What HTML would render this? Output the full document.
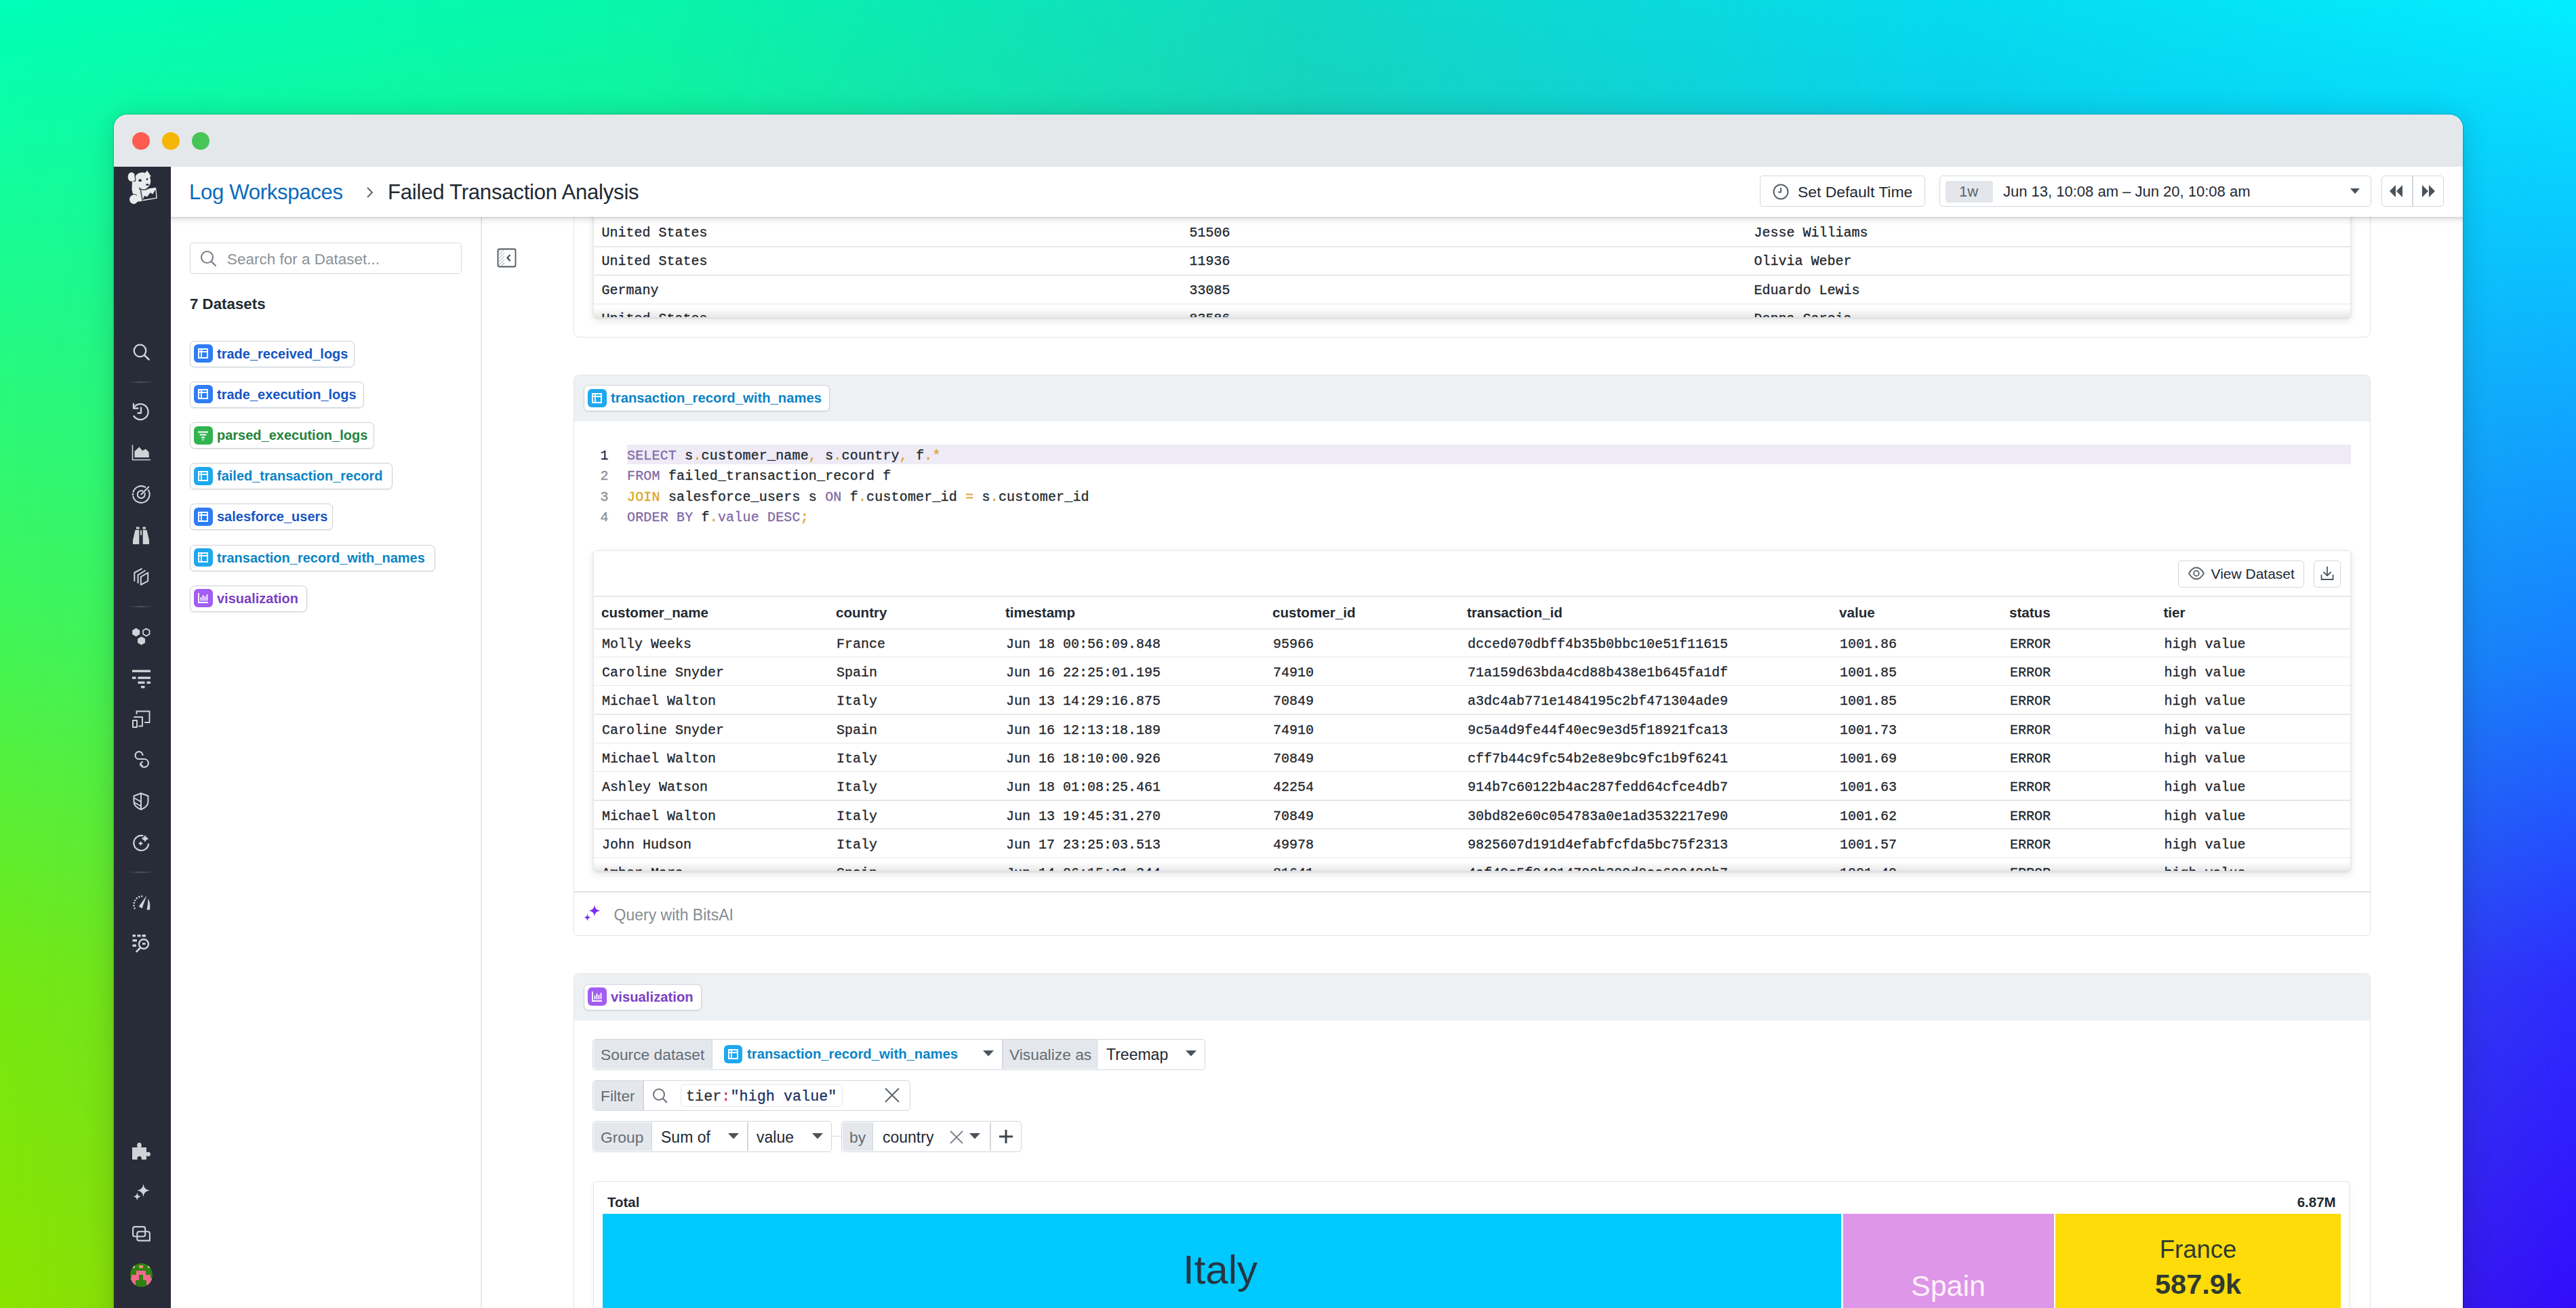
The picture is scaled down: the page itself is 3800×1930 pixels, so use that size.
<!DOCTYPE html><html><head><meta charset="utf-8"><title>Log Workspaces</title><style>
*{box-sizing:border-box;margin:0;padding:0}
html,body{width:3800px;height:1930px;overflow:hidden}
body{position:relative;font-family:"Liberation Sans",sans-serif;background:#00ffb9}
.ab{position:absolute}
.bg{position:absolute;left:0;top:0;width:3800px;height:1930px}
.t{position:absolute;white-space:pre;line-height:1}
.mono{font-family:"Liberation Mono",monospace}
.pill{position:absolute;height:39px;border:1.5px solid #cdd1da;border-radius:7px;background:#fff;box-shadow:0 1px 2px rgba(40,50,80,.10)}
.pill .ic{position:absolute;left:5px;top:4.5px;width:27.5px;height:27px;border-radius:6px}
.pill .tx{position:absolute;left:39px;top:8px;font-size:20px;font-weight:700;white-space:pre;line-height:1}
.card{position:absolute;border:1.5px solid #e2e5e9;border-radius:8px;background:#fff}
.hdrbg{position:absolute;background:#eef1f4}
.row{position:absolute;height:1.5px;background:#e6e8eb}
.cell{position:absolute;white-space:pre;line-height:1;font-family:"Liberation Mono",monospace;font-size:20px;color:#1f262c;-webkit-text-stroke:0.3px currentColor}
.hcell{position:absolute;white-space:pre;line-height:1;font-size:20.6px;font-weight:700;color:#1f2a33}
</style></head><body>
<div class="bg" style="background:linear-gradient(to bottom,#00ffb9 0%,#44f554 50%,#74e914 75%,#8ce400 100%)"></div>
<div class="bg" style="background:linear-gradient(to bottom,#08f6aa 0%,#3ae46a 50%,#6ad040 75%,#78c830 100%);-webkit-mask-image:linear-gradient(to right,transparent 0%,#000 25%)"></div>
<div class="bg" style="background:linear-gradient(to bottom,#12d8c2 0%,#2dbfa0 50%,#5aa070 75%,#60a070 100%);-webkit-mask-image:linear-gradient(to right,transparent 25%,#000 50%)"></div>
<div class="bg" style="background:linear-gradient(to bottom,#06daee 0%,#20a0d0 50%,#3a70c0 75%,#4050b0 100%);-webkit-mask-image:linear-gradient(to right,transparent 50%,#000 75%)"></div>
<div class="bg" style="background:linear-gradient(to bottom,#03eeff 0%,#177dff 50%,#2d2cfe 75%,#330cfc 100%);-webkit-mask-image:linear-gradient(to right,transparent 75%,#000 100%)"></div>
<div class="ab" style="left:168px;top:169px;width:3465px;height:1800px;border-radius:20px 20px 0 0;background:#fff;box-shadow:0 0 3px rgba(0,0,0,.32),0 4px 40px rgba(0,0,0,.17)"></div>
<div class="ab" style="left:168px;top:169px;width:3465px;height:77px;border-radius:20px 20px 0 0;background:#e4e8eb"></div>
<div class="ab" style="left:195px;top:195px;width:26px;height:26px;border-radius:50%;background:#fd5d50"></div>
<div class="ab" style="left:239px;top:195px;width:26px;height:26px;border-radius:50%;background:#f4b505"></div>
<div class="ab" style="left:283px;top:195px;width:26px;height:26px;border-radius:50%;background:#47c556"></div>
<div class="ab" style="left:168px;top:246px;width:84px;height:1700px;background:#272c38"></div>
<div class="ab" style="left:252px;top:246px;width:3381px;height:74px;background:#fff;z-index:5"></div>
<div class="ab" style="left:252px;top:320px;width:3381px;height:12px;background:linear-gradient(to bottom,rgba(0,0,0,.16),rgba(0,0,0,.05) 40%,rgba(0,0,0,0));z-index:5"></div>
<div class="t" style="left:279px;top:268px;font-size:31.2px;letter-spacing:-0.35px;color:#0a6bbd;z-index:6">Log Workspaces</div>
<svg class="ab" style="left:538px;top:274px;z-index:6" width="16" height="20" viewBox="0 0 16 20"><path d="M4 3 L11 10 L4 17" fill="none" stroke="#5d6670" stroke-width="2"/></svg>
<div class="t" style="left:572px;top:268px;font-size:31.2px;letter-spacing:-0.28px;color:#1f2933;z-index:6">Failed Transaction Analysis</div>
<div class="ab" style="left:2596px;top:259px;width:244px;height:46px;border:1.5px solid #d3d7dd;border-radius:5px;z-index:6"></div>
<svg class="ab" style="left:2614px;top:270px;z-index:6" width="26" height="26" viewBox="0 0 26 26"><circle cx="13" cy="13" r="10.5" fill="none" stroke="#5b636b" stroke-width="2"/><path d="M13 7 V13.5 H9" fill="none" stroke="#5b636b" stroke-width="2"/></svg>
<div class="t" style="left:2652px;top:272px;font-size:22.9px;color:#1f2933;z-index:6">Set Default Time</div>
<div class="ab" style="left:2861px;top:259px;width:637px;height:46px;border:1.5px solid #d3d7dd;border-radius:5px;z-index:6"></div>
<div class="ab" style="left:2870px;top:266.5px;width:70px;height:32.5px;background:#e3e7ec;border-radius:4px;z-index:6"></div>
<div class="t" style="left:2890px;top:272px;font-size:22px;color:#5b646d;z-index:6">1w</div>
<div class="t" style="left:2955px;top:272px;font-size:22px;color:#1f2933;z-index:6">Jun 13, 10:08 am – Jun 20, 10:08 am</div>
<svg class="ab" style="left:3466px;top:277px;z-index:6" width="16" height="10" viewBox="0 0 16 10"><path d="M1 1 H15 L8 9 Z" fill="#4a525a"/></svg>
<div class="ab" style="left:3512.5px;top:259px;width:92px;height:46px;border:1.5px solid #d3d7dd;border-radius:5px;z-index:6"></div>
<div class="ab" style="left:3558px;top:259px;width:1.5px;height:46px;background:#d3d7dd;z-index:6"></div>
<svg class="ab" style="left:3522px;top:271px;z-index:6" width="26" height="22" viewBox="0 0 26 22"><path d="M12 2 L3 11 L12 20 Z M22 2 L13 11 L22 20 Z" fill="#4a525a"/></svg>
<svg class="ab" style="left:3569px;top:271px;z-index:6" width="26" height="22" viewBox="0 0 26 22"><path d="M4 2 L13 11 L4 20 Z M14 2 L23 11 L14 20 Z" fill="#4a525a"/></svg>
<svg class="ab" style="left:168px;top:246px;z-index:7" width="84" height="1684" viewBox="168 246 84 1684"><defs><linearGradient id="dg" x1="0" x2="1"><stop offset="0" stop-color="#4a505c" stop-opacity="0"/><stop offset=".5" stop-color="#5a606c"/><stop offset="1" stop-color="#4a505c" stop-opacity="0"/></linearGradient></defs><g fill="#e9eaec"><ellipse cx="194" cy="261" rx="5.4" ry="6.8"/><ellipse cx="209.8" cy="267.2" rx="12.4" ry="12.6"/><path d="M213.5 256 L217 251.5 L222.6 260 L219.5 263 Z"/><path d="M195 266 L205 276 L209 297 L199 298 L194.5 280 Z"/><ellipse cx="197.3" cy="294.2" rx="6.2" ry="6.8"/><path d="M205.7 279.9 L230.1 276.8 L231.9 292.8 L208.6 296.8 Z"/></g><g fill="#272c38"><ellipse cx="206.6" cy="266.2" rx="2.3" ry="1.9"/><ellipse cx="217" cy="264.4" rx="1.2" ry="1.7"/><ellipse cx="217.5" cy="272.6" rx="2.4" ry="1.3"/><path d="M205 277.3 C209 281 215 281 221 276.5" fill="none" stroke="#272c38" stroke-width="1.3"/><path d="M198.6 258.5 C200 262 200.5 266 198.5 268" fill="none" stroke="#272c38" stroke-width="1.2"/><path d="M210.5 294.8 L213 289 L217 290.3 L222 284 L225 286.8 L229.3 279.8 L230.3 291.8 Z"/><path d="M207.5 280 L210.2 296" fill="none" stroke="#272c38" stroke-width="1.3"/><path d="M230.2 279 L231.4 292.2 L209.6 296" fill="none" stroke="#272c38" stroke-width="0"/><path d="M192 288 C195 286 199 286 202 288.5" fill="none" stroke="#272c38" stroke-width="1"/></g><circle cx="206.5" cy="517.5" r="8.8" fill="none" stroke="#cfd2d6" stroke-width="2.3" stroke-linecap="round" stroke-linejoin="round"/><path d="M213 524 L219.5 530.5" fill="none" stroke="#cfd2d6" stroke-width="2.5" stroke-linecap="round" stroke-linejoin="round"/><rect x="187" y="563.05" width="42" height="1.5" fill="url(#dg)"/><rect x="187" y="894.45" width="42" height="1.5" fill="url(#dg)"/><rect x="187" y="1286.25" width="42" height="1.5" fill="url(#dg)"/><path d="M198.5 600 A11.5 11.5 0 1 1 197.5 614" fill="none" stroke="#cfd2d6" stroke-width="2.3" stroke-linecap="round" stroke-linejoin="round"/><path d="M197 596 V602.5 H203.5" fill="none" stroke="#cfd2d6" stroke-width="2.3" stroke-linecap="round" stroke-linejoin="round"/><path d="M208 601.5 V609.5 H203.5" fill="none" stroke="#cfd2d6" stroke-width="2.3" stroke-linecap="round" stroke-linejoin="round"/><path d="M195.5 657 V678.5 H221.5" fill="none" stroke="#cfd2d6" stroke-width="1.6" stroke-linecap="round" stroke-linejoin="round"/><path d="M198.5 675 L198.5 666 L205.5 659.5 L210 665 L215 662.5 L219.5 667 L220 675 Z" fill="#cfd2d6"/><path d="M218.95 723.35 A12.3 12.3 0 1 1 196.42 732.68" fill="none" stroke="#cfd2d6" stroke-width="2.1" stroke-linecap="round" stroke-linejoin="round"/><path d="M196.42 726.32 A12.3 12.3 0 0 1 214.45 718.85" fill="none" stroke="#cfd2d6" stroke-width="2.1" stroke-linecap="round" stroke-linejoin="round"/><path d="M213.47 727.62 A5.5 5.5 0 1 1 210.18 724.33" fill="none" stroke="#cfd2d6" stroke-width="2.1" stroke-linecap="round" stroke-linejoin="round"/><path d="M208.3 729.5 L219.3 718.5" fill="none" stroke="#cfd2d6" stroke-width="2.1" stroke-linecap="round" stroke-linejoin="round"/><circle cx="196" cy="729.5" r="1.5" fill="#cfd2d6"/><g fill="#cfd2d6"><rect x="201" y="777.5" width="4.5" height="3.2"/><rect x="210.5" y="777.5" width="4.5" height="3.2"/><path d="M199.5 782 H205.3 V803 H196 V797 Z"/><path d="M210.7 782 H216.5 L220 797 V803 H210.7 Z"/><rect x="207" y="782.5" width="2" height="7"/></g><path d="M198.3 857 V845 L208.9 839.4" fill="none" stroke="#cfd2d6" stroke-width="2" stroke-linecap="round" stroke-linejoin="round"/><path d="M203.6 859.9 V848.3 L214.1 842" fill="none" stroke="#cfd2d6" stroke-width="2" stroke-linecap="round" stroke-linejoin="round"/><path d="M207.8 851.2 L218.2 845 V857.3 L207.8 862.8 Z" fill="none" stroke="#cfd2d6" stroke-width="2" stroke-linecap="round" stroke-linejoin="round"/><path d="M200.7 939.3 L195.2 936.1 L195.2 929.9 L200.7 926.7 L206.2 929.9 L206.2 936.1 Z" fill="#cfd2d6"/><path d="M215.8 938.4 L211.1 935.7 L211.1 930.3 L215.8 927.6 L220.5 930.3 L220.5 935.7 Z" fill="none" stroke="#cfd2d6" stroke-width="1.8" stroke-linecap="round" stroke-linejoin="round"/><path d="M208.6 951.8 L203.1 948.6 L203.1 942.4 L208.6 939.2 L214.1 942.4 L214.1 948.6 Z" fill="#cfd2d6"/><g fill="#cfd2d6"><rect x="195" y="988.5" width="27" height="3.4"/><rect x="195" y="998.5" width="5.5" height="3.4"/><rect x="203.5" y="998.5" width="18.5" height="3.4"/><rect x="203.5" y="1005.5" width="10" height="3.4"/><rect x="216.5" y="1005.5" width="5.5" height="3.4"/><rect x="208" y="1012" width="5.5" height="3.4"/></g><path d="M201.5 1053 V1049.5 H220.5 V1066 H214" fill="none" stroke="#cfd2d6" stroke-width="2" stroke-linecap="round" stroke-linejoin="round"/><path d="M198 1058 H210 V1071.5 H205" fill="none" stroke="#cfd2d6" stroke-width="2" stroke-linecap="round" stroke-linejoin="round"/><rect x="196" y="1063" width="6" height="10" fill="none" stroke="#cfd2d6" stroke-width="2" stroke-linecap="round" stroke-linejoin="round"/><path d="M210.5 1114 A5.5 5.5 0 1 0 204 1120 H213 A6 6 0 1 1 207 1127" fill="none" stroke="#cfd2d6" stroke-width="2.2" stroke-linecap="round" stroke-linejoin="round"/><path d="M210 1124 L207 1127 L210 1130.5" fill="none" stroke="#cfd2d6" stroke-width="2" stroke-linecap="round" stroke-linejoin="round"/><path d="M208 1170.5 L218.5 1174.5 V1183 C218.5 1188 214 1192 208 1194.5 C202 1192 197.5 1188 197.5 1183 V1174.5 Z" fill="none" stroke="#cfd2d6" stroke-width="2" stroke-linecap="round" stroke-linejoin="round"/><path d="M208 1171 V1194" fill="none" stroke="#cfd2d6" stroke-width="2" stroke-linecap="round" stroke-linejoin="round"/><path d="M198 1177.5 L207 1182.5 M198 1184 L207 1189" fill="none" stroke="#cfd2d6" stroke-width="1.9" stroke-linecap="round" stroke-linejoin="round"/><path d="M210.5 1233.2 A11 11 0 1 0 219.2 1245.5" fill="none" stroke="#cfd2d6" stroke-width="2.2" stroke-linecap="round" stroke-linejoin="round"/><path d="M214 1232.3 Q215.456 1236.044 219.2 1237.5 Q215.456 1238.956 214 1242.7 Q212.544 1238.956 208.8 1237.5 Q212.544 1236.044 214 1232.3 Z" fill="#cfd2d6"/><path d="M207.5 1240.9 Q208.22 1243.78 211.1 1244.5 Q208.22 1245.22 207.5 1248.1 Q206.78 1245.22 203.9 1244.5 Q206.78 1243.78 207.5 1240.9 Z" fill="#cfd2d6"/><path d="M199.2 1341.25 A12.5 12.5 0 0 1 211 1322.5" fill="none" stroke="#cfd2d6" stroke-width="2.4" stroke-dasharray="2.2 1.8"/><path d="M204.8 1337.5 L216.5 1321 L209.5 1340.5 Z" fill="#cfd2d6"/><path d="M218.2 1326 Q222.8 1333 220.8 1342.8 L216.6 1342.2 Q218.6 1334 218.2 1326 Z" fill="#cfd2d6"/><g fill="#cfd2d6"><rect x="195.5" y="1379" width="4.5" height="3.4"/><rect x="202.5" y="1379" width="5" height="3.4"/><rect x="209.5" y="1379" width="5.5" height="3.4"/><rect x="195.5" y="1386" width="6.5" height="3.4"/><rect x="195.5" y="1393.5" width="5.5" height="3.4"/></g><circle cx="212" cy="1393" r="7" fill="none" stroke="#cfd2d6" stroke-width="2.4" stroke-linecap="round" stroke-linejoin="round"/><path d="M207 1398.5 L201.5 1404" fill="none" stroke="#cfd2d6" stroke-width="2.6" stroke-linecap="round" stroke-linejoin="round"/><rect x="210" y="1391" width="4.5" height="3" fill="#cfd2d6"/><path d="M195 1693 H203 C201.3 1689.5 202.5 1686 205.5 1686 C208.5 1686 209.7 1689.5 208 1693 H216 V1700.5 C219 1698.8 222 1700 222 1703 C222 1706 219 1707.2 216 1705.5 V1711 H208.5 C209.5 1708.3 208.3 1706.3 205.7 1706.3 C203.1 1706.3 201.9 1708.3 202.9 1711 H195 Z" fill="#cfd2d6"/><path d="M211.5 1747 C212.7 1753 214.3 1754.8 220.5 1756.5 C214.3 1758.2 212.7 1760 211.5 1766 C210.3 1760 208.7 1758.2 202.5 1756.5 C208.7 1754.8 210.3 1753 211.5 1747 Z" fill="#cfd2d6"/><path d="M202.3 1759.5 C203 1763.5 204 1764.5 207.8 1765.5 C204 1766.5 203 1767.5 202.3 1771.5 C201.6 1767.5 200.6 1766.5 196.8 1765.5 C200.6 1764.5 201.6 1763.5 202.3 1759.5 Z" fill="#cfd2d6"/><rect x="196.1" y="1810.1" width="18.1" height="14.4" rx="3" fill="none" stroke="#cfd2d6" stroke-width="2.1" stroke-linecap="round" stroke-linejoin="round"/><path d="M214.5 1817.3 H218 Q220.9 1817.3 220.9 1820.2 V1830.6 H205.2 Q202.3 1830.6 202.3 1827.7 V1824.5" fill="none" stroke="#cfd2d6" stroke-width="2.1" stroke-linecap="round" stroke-linejoin="round"/><path d="M202.3 1824.5 V1820.2 Q202.3 1817.3 205.2 1817.3 H214.2" fill="none" stroke="#cfd2d6" stroke-width="2.1" stroke-linecap="round" stroke-linejoin="round"/></svg>
<div class="ab" style="left:191.5px;top:1864px;width:33.5px;height:35px;border-radius:50%;overflow:hidden;background:#2f8012;z-index:7"><div class="ab" style="left:13.7px;top:2.7px;width:5.7px;height:4.7px;background:#f0907a"></div><div class="ab" style="left:9.7px;top:10.5px;width:13.8px;height:6.5px;background:#f26a8c"></div><div class="ab" style="left:2.5px;top:17.0px;width:11.2px;height:7.6px;background:#f26a8c"></div><div class="ab" style="left:19.8px;top:17.0px;width:10.7px;height:7.6px;background:#f26a8c"></div><div class="ab" style="left:0.5px;top:22.0px;width:8.0px;height:10.0px;background:#f26a8c"></div><div class="ab" style="left:24.5px;top:22.0px;width:8.0px;height:10.0px;background:#f26a8c"></div><div class="ab" style="left:2.5px;top:3.0px;width:5.0px;height:4.0px;background:#c8c080"></div><div class="ab" style="left:26.0px;top:3.0px;width:5.0px;height:4.0px;background:#c8c080"></div></div>
<div class="ab" style="left:709px;top:320px;width:1.5px;height:1700px;background:#e6e8ec"></div>
<div class="ab" style="left:280px;top:357.5px;width:401px;height:46.5px;border:1.5px solid #d5d9de;border-radius:5px"></div>
<svg class="ab" style="left:294px;top:367.5px" width="28" height="28" viewBox="0 0 28 28"><circle cx="11.5" cy="11.5" r="8.5" fill="none" stroke="#7b838b" stroke-width="2.2"/><path d="M17.5 17.5 L24.5 24.5" stroke="#7b838b" stroke-width="2.4"/></svg>
<div class="t" style="left:335px;top:372px;font-size:22.5px;color:#8c9195">Search for a Dataset...</div>
<div class="t" style="left:280px;top:437.5px;font-size:22.3px;font-weight:700;color:#1f2a33">7 Datasets</div>
<div class="pill" style="left:280px;top:502.6px;width:243.29999999999995px"><div class="ic" style="background:#2f7cf6"><svg width="27" height="27" viewBox="0 0 27 27" style="position:absolute;left:0;top:0"><rect x="7" y="7" width="13" height="13" fill="none" stroke="#fff" stroke-width="2"/><path d="M7 11 H20 M11 7 V20" stroke="#fff" stroke-width="1.8"/></svg></div><div class="tx" style="color:#1655c4;font-size:20.0px">trade_received_logs</div></div>
<div class="pill" style="left:280px;top:562.8000000000001px;width:257px"><div class="ic" style="background:#2f7cf6"><svg width="27" height="27" viewBox="0 0 27 27" style="position:absolute;left:0;top:0"><rect x="7" y="7" width="13" height="13" fill="none" stroke="#fff" stroke-width="2"/><path d="M7 11 H20 M11 7 V20" stroke="#fff" stroke-width="1.8"/></svg></div><div class="tx" style="color:#1655c4;font-size:20.0px">trade_execution_logs</div></div>
<div class="pill" style="left:280px;top:623.0px;width:271.79999999999995px"><div class="ic" style="background:#31b350"><svg width="27" height="27" viewBox="0 0 27 27" style="position:absolute;left:0;top:0"><path d="M6 8.5 H21 M8.5 12.5 H18.5 M11 16.5 H16 M12.5 20 H14.5" stroke="#fff" stroke-width="2.2"/></svg></div><div class="tx" style="color:#23833a;font-size:20.0px">parsed_execution_logs</div></div>
<div class="pill" style="left:280px;top:683.2px;width:299px"><div class="ic" style="background:#1ea8ee"><svg width="27" height="27" viewBox="0 0 27 27" style="position:absolute;left:0;top:0"><rect x="7" y="7" width="13" height="13" fill="none" stroke="#fff" stroke-width="2"/><path d="M7 11 H20 M11 7 V20" stroke="#fff" stroke-width="1.8"/></svg></div><div class="tx" style="color:#0a84c6;font-size:20.0px">failed_transaction_record</div></div>
<div class="pill" style="left:280px;top:743.4000000000001px;width:210.8px"><div class="ic" style="background:#2f7cf6"><svg width="27" height="27" viewBox="0 0 27 27" style="position:absolute;left:0;top:0"><rect x="7" y="7" width="13" height="13" fill="none" stroke="#fff" stroke-width="2"/><path d="M7 11 H20 M11 7 V20" stroke="#fff" stroke-width="1.8"/></svg></div><div class="tx" style="color:#1655c4;font-size:20.0px">salesforce_users</div></div>
<div class="pill" style="left:280px;top:803.6px;width:362.20000000000005px"><div class="ic" style="background:#1ea8ee"><svg width="27" height="27" viewBox="0 0 27 27" style="position:absolute;left:0;top:0"><rect x="7" y="7" width="13" height="13" fill="none" stroke="#fff" stroke-width="2"/><path d="M7 11 H20 M11 7 V20" stroke="#fff" stroke-width="1.8"/></svg></div><div class="tx" style="color:#0a84c6;font-size:20.0px">transaction_record_with_names</div></div>
<div class="pill" style="left:280px;top:863.8000000000001px;width:172.8px"><div class="ic" style="background:#a25df2"><svg width="27" height="27" viewBox="0 0 27 27" style="position:absolute;left:0;top:0"><path d="M7 6 V20 H21" fill="none" stroke="#fff" stroke-width="1.8"/><path d="M10.5 17.5 V12 M13.5 17.5 V9 M16.5 17.5 V11 M19.5 17.5 V8" stroke="#fff" stroke-width="1.8"/></svg></div><div class="tx" style="color:#7a3fc4;font-size:20.0px">visualization</div></div>
<svg class="ab" style="left:733px;top:366px" width="29" height="29" viewBox="0 0 29 29"><rect x="1.5" y="1.5" width="26" height="26" rx="2" fill="none" stroke="#4d555d" stroke-width="1.8"/><path d="M2 6 L6 2 M2 11 L11 2 M2 16 L11 7 M2 21 L11 12 M2 26 L11 17 M6 27 L11 22" stroke="#9aa0a6" stroke-width="1"/><path d="M19.5 10 L15.5 14.5 L19.5 19" fill="none" stroke="#4d555d" stroke-width="2.4"/></svg>
<div class="card" style="left:846px;top:290px;width:2651px;height:208px"></div>
<div class="ab" style="left:875px;top:290px;width:2593px;height:178.5px;box-shadow:0 4px 12px rgba(0,0,0,.10),0 1px 2px rgba(0,0,0,.10);border-radius:0 0 5px 5px"></div><div class="ab" style="left:875px;top:290px;width:2593px;height:178.5px;background:#fff;border:1.5px solid #e3e6ea;border-radius:5px;overflow:hidden"><div class="cell" style="left:11.5px;top:43.0px">United States</div><div class="cell" style="left:878.5px;top:43.0px">51506</div><div class="cell" style="left:1711.5px;top:43.0px">Jesse Williams</div><div class="cell" style="left:11.5px;top:85.3px">United States</div><div class="cell" style="left:878.5px;top:85.3px">11936</div><div class="cell" style="left:1711.5px;top:85.3px">Olivia Weber</div><div class="cell" style="left:11.5px;top:127.6px">Germany</div><div class="cell" style="left:878.5px;top:127.6px">33085</div><div class="cell" style="left:1711.5px;top:127.6px">Eduardo Lewis</div><div class="cell" style="left:11.5px;top:169.9px">United States</div><div class="cell" style="left:878.5px;top:169.9px">83586</div><div class="cell" style="left:1711.5px;top:169.9px">Donna Garcia</div><div class="row" style="left:0;top:72.1px;width:2600px"></div><div class="row" style="left:0;top:114.4px;width:2600px"></div><div class="row" style="left:0;top:156.6px;width:2600px"></div><div class="row" style="left:0;top:198.9px;width:2600px"></div><div class="ab" style="left:0;right:0;bottom:0;height:14px;background:linear-gradient(to bottom,rgba(0,0,0,0),rgba(0,0,0,.09))"></div></div>
<div class="card" style="left:846px;top:553px;width:2651px;height:828px;overflow:hidden"><div class="hdrbg" style="left:0;top:0;width:100%;height:67.5px"></div><div class="ab" style="left:0;top:761px;width:100%;height:1.5px;background:#e2e5e9"></div></div>
<div class="pill" style="left:861px;top:568px;width:362.5px"><div class="ic" style="background:#1ea8ee"><svg width="27" height="27" viewBox="0 0 27 27" style="position:absolute;left:0;top:0"><rect x="7" y="7" width="13" height="13" fill="none" stroke="#fff" stroke-width="2"/><path d="M7 11 H20 M11 7 V20" stroke="#fff" stroke-width="1.8"/></svg></div><div class="tx" style="color:#0a84c6;font-size:20.3px">transaction_record_with_names</div></div>
<div class="ab" style="left:925px;top:656px;width:2543px;height:29px;background:#eeebf6"></div>
<div class="cell" style="left:885.5px;top:662.9px;color:#1b2550">1</div>
<div class="cell" style="left:925px;top:662.9px;letter-spacing:0.17px"><span style="color:#7f6aa6">SELECT</span><span style="color:#20282e"> s</span><span style="color:#dca323">.</span><span style="color:#20282e">customer_name</span><span style="color:#dca323">,</span><span style="color:#20282e"> s</span><span style="color:#dca323">.</span><span style="color:#20282e">country</span><span style="color:#dca323">,</span><span style="color:#20282e"> f</span><span style="color:#dca323">.*</span></div>
<div class="cell" style="left:885.5px;top:693.3px;color:#8a8f94">2</div>
<div class="cell" style="left:925px;top:693.3px;letter-spacing:0.17px"><span style="color:#7f6aa6">FROM</span><span style="color:#20282e"> failed_transaction_record f</span></div>
<div class="cell" style="left:885.5px;top:723.7px;color:#8a8f94">3</div>
<div class="cell" style="left:925px;top:723.7px;letter-spacing:0.17px"><span style="color:#dca323">JOIN</span><span style="color:#20282e"> salesforce_users s </span><span style="color:#7f6aa6">ON</span><span style="color:#20282e"> f</span><span style="color:#dca323">.</span><span style="color:#20282e">customer_id </span><span style="color:#dca323">=</span><span style="color:#20282e"> s</span><span style="color:#dca323">.</span><span style="color:#20282e">customer_id</span></div>
<div class="cell" style="left:885.5px;top:754.1px;color:#8a8f94">4</div>
<div class="cell" style="left:925px;top:754.1px;letter-spacing:0.17px"><span style="color:#7f6aa6">ORDER BY</span><span style="color:#20282e"> f</span><span style="color:#dca323">.</span><span style="color:#7f6aa6">value DESC</span><span style="color:#dca323">;</span></div>
<div class="ab" style="left:875px;top:812px;width:2593px;height:473.5px;box-shadow:0 4px 12px rgba(0,0,0,.10),0 1px 2px rgba(0,0,0,.10);border-radius:0 0 5px 5px"></div><div class="ab" style="left:875px;top:812px;width:2593px;height:473.5px;background:#fff;border:1.5px solid #e3e6ea;border-radius:5px;overflow:hidden"><div class="cell" style="left:12.0px;top:127.8px">Molly Weeks</div><div class="cell" style="left:358.0px;top:127.8px">France</div><div class="cell" style="left:608.0px;top:127.8px">Jun 18 00:56:09.848</div><div class="cell" style="left:1002.0px;top:127.8px">95966</div><div class="cell" style="left:1289.0px;top:127.8px">dcced070dbff4b35b0bbc10e51f11615</div><div class="cell" style="left:1838.0px;top:127.8px">1001.86</div><div class="cell" style="left:2089.0px;top:127.8px">ERROR</div><div class="cell" style="left:2316.5px;top:127.8px">high value</div><div class="cell" style="left:12.0px;top:170.1px">Caroline Snyder</div><div class="cell" style="left:358.0px;top:170.1px">Spain</div><div class="cell" style="left:608.0px;top:170.1px">Jun 16 22:25:01.195</div><div class="cell" style="left:1002.0px;top:170.1px">74910</div><div class="cell" style="left:1289.0px;top:170.1px">71a159d63bda4cd88b438e1b645fa1df</div><div class="cell" style="left:1838.0px;top:170.1px">1001.85</div><div class="cell" style="left:2089.0px;top:170.1px">ERROR</div><div class="cell" style="left:2316.5px;top:170.1px">high value</div><div class="cell" style="left:12.0px;top:212.4px">Michael Walton</div><div class="cell" style="left:358.0px;top:212.4px">Italy</div><div class="cell" style="left:608.0px;top:212.4px">Jun 13 14:29:16.875</div><div class="cell" style="left:1002.0px;top:212.4px">70849</div><div class="cell" style="left:1289.0px;top:212.4px">a3dc4ab771e1484195c2bf471304ade9</div><div class="cell" style="left:1838.0px;top:212.4px">1001.85</div><div class="cell" style="left:2089.0px;top:212.4px">ERROR</div><div class="cell" style="left:2316.5px;top:212.4px">high value</div><div class="cell" style="left:12.0px;top:254.7px">Caroline Snyder</div><div class="cell" style="left:358.0px;top:254.7px">Spain</div><div class="cell" style="left:608.0px;top:254.7px">Jun 16 12:13:18.189</div><div class="cell" style="left:1002.0px;top:254.7px">74910</div><div class="cell" style="left:1289.0px;top:254.7px">9c5a4d9fe44f40ec9e3d5f18921fca13</div><div class="cell" style="left:1838.0px;top:254.7px">1001.73</div><div class="cell" style="left:2089.0px;top:254.7px">ERROR</div><div class="cell" style="left:2316.5px;top:254.7px">high value</div><div class="cell" style="left:12.0px;top:297.0px">Michael Walton</div><div class="cell" style="left:358.0px;top:297.0px">Italy</div><div class="cell" style="left:608.0px;top:297.0px">Jun 16 18:10:00.926</div><div class="cell" style="left:1002.0px;top:297.0px">70849</div><div class="cell" style="left:1289.0px;top:297.0px">cff7b44c9fc54b2e8e9bc9fc1b9f6241</div><div class="cell" style="left:1838.0px;top:297.0px">1001.69</div><div class="cell" style="left:2089.0px;top:297.0px">ERROR</div><div class="cell" style="left:2316.5px;top:297.0px">high value</div><div class="cell" style="left:12.0px;top:339.3px">Ashley Watson</div><div class="cell" style="left:358.0px;top:339.3px">Italy</div><div class="cell" style="left:608.0px;top:339.3px">Jun 18 01:08:25.461</div><div class="cell" style="left:1002.0px;top:339.3px">42254</div><div class="cell" style="left:1289.0px;top:339.3px">914b7c60122b4ac287fedd64cfce4db7</div><div class="cell" style="left:1838.0px;top:339.3px">1001.63</div><div class="cell" style="left:2089.0px;top:339.3px">ERROR</div><div class="cell" style="left:2316.5px;top:339.3px">high value</div><div class="cell" style="left:12.0px;top:381.6px">Michael Walton</div><div class="cell" style="left:358.0px;top:381.6px">Italy</div><div class="cell" style="left:608.0px;top:381.6px">Jun 13 19:45:31.270</div><div class="cell" style="left:1002.0px;top:381.6px">70849</div><div class="cell" style="left:1289.0px;top:381.6px">30bd82e60c054783a0e1ad3532217e90</div><div class="cell" style="left:1838.0px;top:381.6px">1001.62</div><div class="cell" style="left:2089.0px;top:381.6px">ERROR</div><div class="cell" style="left:2316.5px;top:381.6px">high value</div><div class="cell" style="left:12.0px;top:423.9px">John Hudson</div><div class="cell" style="left:358.0px;top:423.9px">Italy</div><div class="cell" style="left:608.0px;top:423.9px">Jun 17 23:25:03.513</div><div class="cell" style="left:1002.0px;top:423.9px">49978</div><div class="cell" style="left:1289.0px;top:423.9px">9825607d191d4efabfcfda5bc75f2313</div><div class="cell" style="left:1838.0px;top:423.9px">1001.57</div><div class="cell" style="left:2089.0px;top:423.9px">ERROR</div><div class="cell" style="left:2316.5px;top:423.9px">high value</div><div class="cell" style="left:12.0px;top:466.2px">Amber Mara</div><div class="cell" style="left:358.0px;top:466.2px">Spain</div><div class="cell" style="left:608.0px;top:466.2px">Jun 14 06:15:21.344</div><div class="cell" style="left:1002.0px;top:466.2px">81641</div><div class="cell" style="left:1289.0px;top:466.2px">4af49c5f04014700b309d0cc690490b7</div><div class="cell" style="left:1838.0px;top:466.2px">1001.49</div><div class="cell" style="left:2089.0px;top:466.2px">ERROR</div><div class="cell" style="left:2316.5px;top:466.2px">high value</div><div class="row" style="left:0;top:155.5px;width:2600px"></div><div class="row" style="left:0;top:197.8px;width:2600px"></div><div class="row" style="left:0;top:240.1px;width:2600px"></div><div class="row" style="left:0;top:282.5px;width:2600px"></div><div class="row" style="left:0;top:324.8px;width:2600px"></div><div class="row" style="left:0;top:367.0px;width:2600px"></div><div class="row" style="left:0;top:409.3px;width:2600px"></div><div class="row" style="left:0;top:451.6px;width:2600px"></div><div class="row" style="left:0;top:66.2px;width:2600px"></div><div class="row" style="left:0;top:114.0px;width:2600px"></div><div class="hcell" style="left:11.0px;top:81.1px">customer_name</div><div class="hcell" style="left:357.0px;top:81.1px">country</div><div class="hcell" style="left:607.0px;top:81.1px">timestamp</div><div class="hcell" style="left:1001.0px;top:81.1px">customer_id</div><div class="hcell" style="left:1288.0px;top:81.1px">transaction_id</div><div class="hcell" style="left:1837.0px;top:81.1px">value</div><div class="hcell" style="left:2088.0px;top:81.1px">status</div><div class="hcell" style="left:2315.5px;top:81.1px">tier</div><div class="ab" style="left:0;right:0;bottom:0;height:14px;background:linear-gradient(to bottom,rgba(0,0,0,0),rgba(0,0,0,.09))"></div></div>
<div class="ab" style="left:3213px;top:826.5px;width:185.5px;height:40px;border:1.5px solid #d3d7dd;border-radius:5px;background:#fff"></div>
<svg class="ab" style="left:3227px;top:835px" width="26" height="22" viewBox="0 0 26 22"><path d="M2 11 C6 4 10 2.5 13 2.5 C16 2.5 20 4 24 11 C20 18 16 19.5 13 19.5 C10 19.5 6 18 2 11 Z" fill="none" stroke="#5b636b" stroke-width="1.8"/><circle cx="13" cy="11" r="3.8" fill="none" stroke="#5b636b" stroke-width="1.8"/></svg>
<div class="t" style="left:3261.5px;top:836px;font-size:21px;color:#1f2933">View Dataset</div>
<div class="ab" style="left:3413px;top:826.5px;width:39.5px;height:40px;border:1.5px solid #d3d7dd;border-radius:5px;background:#fff"></div>
<svg class="ab" style="left:3422px;top:834px" width="22" height="24" viewBox="0 0 22 24"><path d="M11 2 V15 M5.5 10 L11 15.5 L16.5 10" fill="none" stroke="#4d555d" stroke-width="1.8"/><path d="M2.5 14 V21 H19.5 V14" fill="none" stroke="#4d555d" stroke-width="1.8"/></svg>
<svg class="ab" style="left:860px;top:1334px" width="28" height="28" viewBox="0 0 28 28"><path d="M17 1.5 C18.2 7 19.8 8.6 25.5 9.8 C19.8 11 18.2 12.6 17 18.1 C15.8 12.6 14.2 11 8.5 9.8 C14.2 8.6 15.8 7 17 1.5 Z" fill="#7a2ff0"/><path d="M6.5 14.5 C7.2 18 8.2 19 11.8 19.7 C8.2 20.4 7.2 21.4 6.5 25 C5.8 21.4 4.8 20.4 1.2 19.7 C4.8 19 5.8 18 6.5 14.5 Z" fill="#7a2ff0"/></svg>
<div class="t" style="left:905.5px;top:1339px;font-size:23px;color:#868d94">Query with BitsAI</div>
<div class="card" style="left:846px;top:1436px;width:2651px;height:600px;overflow:hidden"><div class="hdrbg" style="left:0;top:0;width:100%;height:69px"></div></div>
<div class="pill" style="left:861px;top:1451.5px;width:173.5px"><div class="ic" style="background:#a25df2"><svg width="27" height="27" viewBox="0 0 27 27" style="position:absolute;left:0;top:0"><path d="M7 6 V20 H21" fill="none" stroke="#fff" stroke-width="1.8"/><path d="M10.5 17.5 V12 M13.5 17.5 V9 M16.5 17.5 V11 M19.5 17.5 V8" stroke="#fff" stroke-width="1.8"/></svg></div><div class="tx" style="color:#7a3fc4;font-size:20.3px">visualization</div></div>
<div class="ab" style="left:874px;top:1532.5px;width:904px;height:46.0px;background:#fff;border:1.5px solid #d3d7dd;border-radius:5px"></div>
<div class="ab" style="left:875.5px;top:1534px;width:174.0px;height:43px;background:#e4e8ed;border-radius:4px 0 0 4px"></div>
<div class="ab" style="left:1049.5px;top:1534px;width:1.5px;height:43px;background:#d3d7dd;"></div>
<div class="ab" style="left:1479px;top:1534px;width:139px;height:43px;background:#e4e8ed;"></div>
<div class="ab" style="left:1478px;top:1534px;width:1.5px;height:43px;background:#d3d7dd;"></div>
<div class="ab" style="left:1617.5px;top:1534px;width:1.5px;height:43px;background:#d3d7dd;"></div>
<div class="t" style="left:886px;top:1545px;font-size:22.8px;color:#646c74">Source dataset</div>
<div class="ab" style="left:1068px;top:1542px;width:27px;height:27px;border-radius:6px;background:#1ea8ee"><svg width="27" height="27" viewBox="0 0 27 27" style="position:absolute;left:0;top:0"><rect x="7" y="7" width="13" height="13" fill="none" stroke="#fff" stroke-width="2"/><path d="M7 11 H20 M11 7 V20" stroke="#fff" stroke-width="1.8"/></svg></div>
<div class="t" style="left:1102px;top:1545px;font-size:20.3px;font-weight:700;color:#0a84c6">transaction_record_with_names</div>
<svg class="ab" style="left:1449px;top:1549px" width="18" height="10" viewBox="0 0 18 10"><path d="M1 1 H17 L9 9.5 Z" fill="#4a525a"/></svg>
<div class="t" style="left:1489px;top:1545px;font-size:22.8px;color:#646c74">Visualize as</div>
<div class="t" style="left:1632px;top:1545px;font-size:23px;color:#1f2933">Treemap</div>
<svg class="ab" style="left:1748px;top:1549px" width="18" height="10" viewBox="0 0 18 10"><path d="M1 1 H17 L9 9.5 Z" fill="#4a525a"/></svg>
<div class="ab" style="left:874px;top:1593.5px;width:468.5px;height:45.5px;background:#fff;border:1.5px solid #d3d7dd;border-radius:5px"></div>
<div class="ab" style="left:875.5px;top:1595px;width:73.0px;height:42.5px;background:#e4e8ed;border-radius:4px 0 0 4px"></div>
<div class="ab" style="left:948px;top:1595px;width:1.5px;height:42.5px;background:#d3d7dd;"></div>
<div class="t" style="left:886px;top:1606px;font-size:22.8px;color:#646c74">Filter</div>
<svg class="ab" style="left:961px;top:1604px" width="26" height="26" viewBox="0 0 26 26"><circle cx="11" cy="11" r="8" fill="none" stroke="#6b737b" stroke-width="2"/><path d="M16.5 16.5 L23 23" stroke="#6b737b" stroke-width="2.2"/></svg>
<div class="ab" style="left:1004px;top:1600px;width:238.5px;height:33px;background:#fff;border:1.5px solid #e3e6ea;border-radius:5px"></div>
<div class="cell" style="left:1012px;top:1607.5px;font-size:21.8px;color:#2a3136">tier<span style="color:#d6336c">:</span><span style="color:#1b3366">"high value"</span></div>
<svg class="ab" style="left:1303px;top:1603px" width="26" height="26" viewBox="0 0 26 26"><path d="M3 3 L23 23 M23 3 L3 23" stroke="#5b636b" stroke-width="2"/></svg>
<div class="ab" style="left:874px;top:1654px;width:352.5px;height:45.5px;background:#fff;border:1.5px solid #d3d7dd;border-radius:5px"></div>
<div class="ab" style="left:875.5px;top:1655.5px;width:85.5px;height:42.5px;background:#e4e8ed;border-radius:4px 0 0 4px"></div>
<div class="ab" style="left:960.5px;top:1655.5px;width:1.5px;height:42.5px;background:#d3d7dd;"></div>
<div class="ab" style="left:1102px;top:1655.5px;width:1.5px;height:42.5px;background:#d3d7dd;"></div>
<div class="t" style="left:886px;top:1667px;font-size:22.8px;color:#646c74">Group</div>
<div class="t" style="left:975px;top:1667px;font-size:23px;color:#1f2933">Sum of</div>
<svg class="ab" style="left:1073px;top:1671px" width="18" height="10" viewBox="0 0 18 10"><path d="M1 1 H17 L9 9.5 Z" fill="#4a525a"/></svg>
<div class="t" style="left:1116px;top:1667px;font-size:23px;color:#1f2933">value</div>
<svg class="ab" style="left:1197px;top:1671px" width="18" height="10" viewBox="0 0 18 10"><path d="M1 1 H17 L9 9.5 Z" fill="#4a525a"/></svg>
<div class="ab" style="left:1226.5px;top:1675.5px;width:15.0px;height:1.5px;background:#d3d7dd;"></div>
<div class="ab" style="left:1241px;top:1654px;width:265.5px;height:45.5px;background:#fff;border:1.5px solid #d3d7dd;border-radius:5px"></div>
<div class="ab" style="left:1242.5px;top:1655.5px;width:44.5px;height:42.5px;background:#e4e8ed;border-radius:4px 0 0 4px"></div>
<div class="ab" style="left:1286.5px;top:1655.5px;width:1.5px;height:42.5px;background:#d3d7dd;"></div>
<div class="ab" style="left:1460px;top:1655.5px;width:1.5px;height:42.5px;background:#d3d7dd;"></div>
<div class="t" style="left:1253px;top:1667px;font-size:22.8px;color:#646c74">by</div>
<div class="t" style="left:1302px;top:1667px;font-size:23px;color:#1f2933">country</div>
<svg class="ab" style="left:1400px;top:1667px" width="22" height="22" viewBox="0 0 22 22"><path d="M2 2 L20 20 M20 2 L2 20" stroke="#7b838b" stroke-width="1.8"/></svg>
<svg class="ab" style="left:1429px;top:1671px" width="18" height="10" viewBox="0 0 18 10"><path d="M1 1 H17 L9 9.5 Z" fill="#4a525a"/></svg>
<svg class="ab" style="left:1471px;top:1664px" width="26" height="26" viewBox="0 0 26 26"><path d="M13 3 V23 M3 13 H23" stroke="#3d454d" stroke-width="3"/></svg>
<div class="ab" style="left:874.5px;top:1742.5px;width:2591.5px;height:257.5px;background:#fff;border:1.5px solid #e3e6ea;border-radius:6px;box-shadow:0 2px 8px rgba(0,0,0,.06)"></div>
<div class="t" style="left:896px;top:1764px;font-size:20.5px;font-weight:700;color:#1f2933">Total</div>
<div class="t" style="left:3300px;width:145.7px;text-align:right;top:1764px;font-size:20.5px;font-weight:700;color:#1f2933">6.87M</div>
<div class="ab" style="left:889px;top:1790.5px;width:1827px;height:209.5px;background:#00c9ff;"></div>
<div class="ab" style="left:2719px;top:1790.5px;width:310.5px;height:209.5px;background:#dd96e8;"></div>
<div class="ab" style="left:3032px;top:1790.5px;width:421px;height:209.5px;background:#fddc0a;"></div>
<div class="t" style="left:1600px;width:400px;text-align:center;top:1843.5px;font-size:60px;color:#253542">Italy</div>
<div class="t" style="left:2719px;width:310px;text-align:center;top:1875.5px;font-size:43px;color:#fff2fb">Spain</div>
<div class="t" style="left:3032px;width:421px;text-align:center;top:1825.5px;font-size:36.5px;color:#2f3a33">France</div>
<div class="t" style="left:3032px;width:421px;text-align:center;top:1873.5px;font-size:41.5px;font-weight:700;color:#2f3a33">587.9k</div>
</body></html>
